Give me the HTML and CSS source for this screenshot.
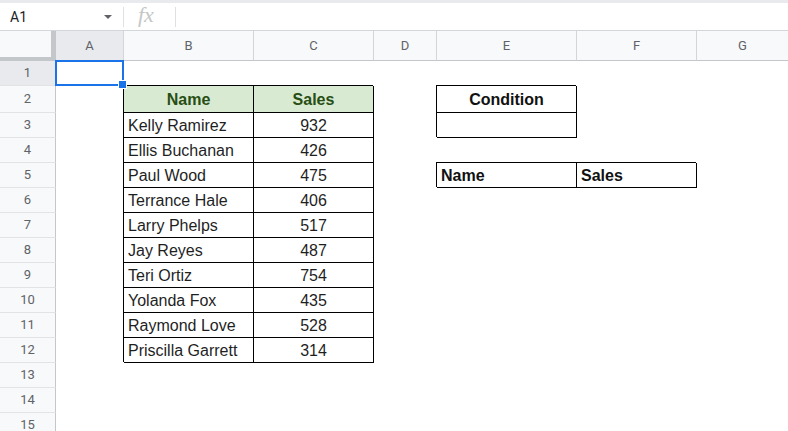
FILE: index.html
```html
<!DOCTYPE html>
<html lang="en">
<head>
    <meta charset="UTF-8">
    <title>Sheet</title>
    <link rel="stylesheet" href="styles.css">
</head>
<body>
    <div class="formula-bar">
        <div class="name-box">
            <span class="ref">A1</span>
            <span class="caret"></span>
        </div>
        <div class="sep"></div>
        <div class="fx">fx</div>
        <div class="sep"></div>
    </div>

    <div class="sheet">
        <!-- column headers -->
        <div class="corner"></div>
        <div class="col-head active">A</div>
        <div class="col-head">B</div>
        <div class="col-head">C</div>
        <div class="col-head">D</div>
        <div class="col-head">E</div>
        <div class="col-head">F</div>
        <div class="col-head last">G</div>

        <!-- row 1 -->
        <div class="row-head active">1</div>
        <div class="cell a1"></div>
        <div class="cell"></div><div class="cell"></div><div class="cell"></div>
        <div class="cell"></div><div class="cell"></div><div class="cell"></div>

        <!-- row 2 -->
        <div class="row-head">2</div>
        <div class="cell"></div>
        <div class="cell box head">Name</div>
        <div class="cell box head">Sales</div>
        <div class="cell"></div>
        <div class="cell box bold center">Condition</div>
        <div class="cell"></div><div class="cell"></div>

        <!-- row 3 -->
        <div class="row-head">3</div>
        <div class="cell"></div>
        <div class="cell box">Kelly Ramirez</div>
        <div class="cell box center">932</div>
        <div class="cell"></div>
        <div class="cell box"></div>
        <div class="cell"></div><div class="cell"></div>

        <!-- row 4 -->
        <div class="row-head">4</div>
        <div class="cell"></div>
        <div class="cell box">Ellis Buchanan</div>
        <div class="cell box center">426</div>
        <div class="cell"></div><div class="cell"></div><div class="cell"></div><div class="cell"></div>

        <!-- row 5 -->
        <div class="row-head">5</div>
        <div class="cell"></div>
        <div class="cell box">Paul Wood</div>
        <div class="cell box center">475</div>
        <div class="cell"></div>
        <div class="cell box bold">Name</div>
        <div class="cell box bold">Sales</div>
        <div class="cell"></div>

        <!-- row 6 -->
        <div class="row-head">6</div>
        <div class="cell"></div>
        <div class="cell box">Terrance Hale</div>
        <div class="cell box center">406</div>
        <div class="cell"></div><div class="cell"></div><div class="cell"></div><div class="cell"></div>

        <!-- row 7 -->
        <div class="row-head">7</div>
        <div class="cell"></div>
        <div class="cell box">Larry Phelps</div>
        <div class="cell box center">517</div>
        <div class="cell"></div><div class="cell"></div><div class="cell"></div><div class="cell"></div>

        <!-- row 8 -->
        <div class="row-head">8</div>
        <div class="cell"></div>
        <div class="cell box">Jay Reyes</div>
        <div class="cell box center">487</div>
        <div class="cell"></div><div class="cell"></div><div class="cell"></div><div class="cell"></div>

        <!-- row 9 -->
        <div class="row-head">9</div>
        <div class="cell"></div>
        <div class="cell box">Teri Ortiz</div>
        <div class="cell box center">754</div>
        <div class="cell"></div><div class="cell"></div><div class="cell"></div><div class="cell"></div>

        <!-- row 10 -->
        <div class="row-head">10</div>
        <div class="cell"></div>
        <div class="cell box">Yolanda Fox</div>
        <div class="cell box center">435</div>
        <div class="cell"></div><div class="cell"></div><div class="cell"></div><div class="cell"></div>

        <!-- row 11 -->
        <div class="row-head">11</div>
        <div class="cell"></div>
        <div class="cell box">Raymond Love</div>
        <div class="cell box center">528</div>
        <div class="cell"></div><div class="cell"></div><div class="cell"></div><div class="cell"></div>

        <!-- row 12 -->
        <div class="row-head">12</div>
        <div class="cell"></div>
        <div class="cell box">Priscilla Garrett</div>
        <div class="cell box center">314</div>
        <div class="cell"></div><div class="cell"></div><div class="cell"></div><div class="cell"></div>

        <div class="row-head">13</div>
        <div class="cell"></div><div class="cell"></div><div class="cell"></div><div class="cell"></div>
        <div class="cell"></div><div class="cell"></div><div class="cell"></div>

        <div class="row-head">14</div>
        <div class="cell"></div><div class="cell"></div><div class="cell"></div><div class="cell"></div>
        <div class="cell"></div><div class="cell"></div><div class="cell"></div>

        <div class="row-head">15</div>
        <div class="cell"></div><div class="cell"></div><div class="cell"></div><div class="cell"></div>
        <div class="cell"></div><div class="cell"></div><div class="cell"></div>
    </div>
</body>
</html>
```
FILE: styles.css
```css
* {
    box-sizing: border-box;
}
body {
    margin: 0;
    background: #fff;
    font-family: "Liberation Sans", Arial, sans-serif;
    overflow: hidden;
}

/* formula bar */
.formula-bar {
    display: flex;
    align-items: center;
    height: 31px;
    border-top: 3px solid #e8eaed;
    border-bottom: 1px solid #d3d5d8;
}
.name-box {
    display: flex;
    align-items: center;
    justify-content: space-between;
    width: 123px;
    padding: 0 10px 0 10px;
}
.ref {
    font-family: Roboto, sans-serif;
    font-size: 14px;
    color: #202124;
}
.caret {
    width: 0;
    height: 0;
    border-left: 4px solid transparent;
    border-right: 4px solid transparent;
    border-top: 4px solid #5f6368;
    margin-right: 1px;
}
.sep {
    width: 1px;
    height: 20px;
    background: #e0e0e0;
}
.fx {
    width: 51px;
    padding-left: 14px;
    font-family: "Liberation Serif", serif;
    font-style: italic;
    font-size: 22px;
    color: #c4c7c5;
    line-height: 1;
    margin-top: -3px;
}

/* grid */
.sheet {
    display: grid;
    grid-template-columns: 56px 68px 130px 120px 63px 140px 120px 1fr;
    grid-template-rows: 30px 25px 27px repeat(13, 25px);
}
.corner {
    background: #f8f9fa;
    border-right: 5px solid #c4c7c9;
    border-bottom: 4px solid #c4c7c9;
}
.col-head, .row-head {
    display: flex;
    align-items: center;
    justify-content: center;
    background: #f8f9fa;
    font-family: Roboto, sans-serif;
    font-size: 13px;
    color: #5f6368;
    border-right: 1px solid #d3d5d8;
    border-bottom: 1px solid #d3d5d8;
}
.col-head {
    border-bottom: 1px solid #c4c7c9;
}
.col-head.last {
    border-right: none;
}
.row-head {
    border-right: 1px solid #c4c7c9;
    border-bottom: 1px solid #e2e3e5;
    padding-bottom: 2px;
}
.active {
    background: #e8eaed;
}

.cell {
    display: flex;
    align-items: center;
    padding: 1px 4px 0;
    font-size: 16px;
    color: #1f1f1f;
    white-space: nowrap;
    border-right: 1px solid transparent;
    border-bottom: 1px solid transparent;
}
.cell.a1 {
    position: relative;
}
.cell.a1::before {
    content: "";
    position: absolute;
    left: -1px;
    top: -1px;
    right: -1px;
    bottom: -1px;
    border: 2px solid #1a73e8;
}
.cell.a1::after {
    content: "";
    position: absolute;
    right: -4px;
    bottom: -4px;
    width: 7px;
    height: 7px;
    background: #1a73e8;
    border: 1px solid #fff;
}
.box {
    border-right-color: #000;
    border-bottom-color: #000;
    box-shadow: -1px -1px 0 #000;
}
.head {
    justify-content: center;
    background: #d9ead3;
    color: #274e13;
    font-weight: bold;
    font-size: 16px;
}
.bold {
    font-weight: bold;
    color: #111;
}
.center {
    justify-content: center;
}
```
